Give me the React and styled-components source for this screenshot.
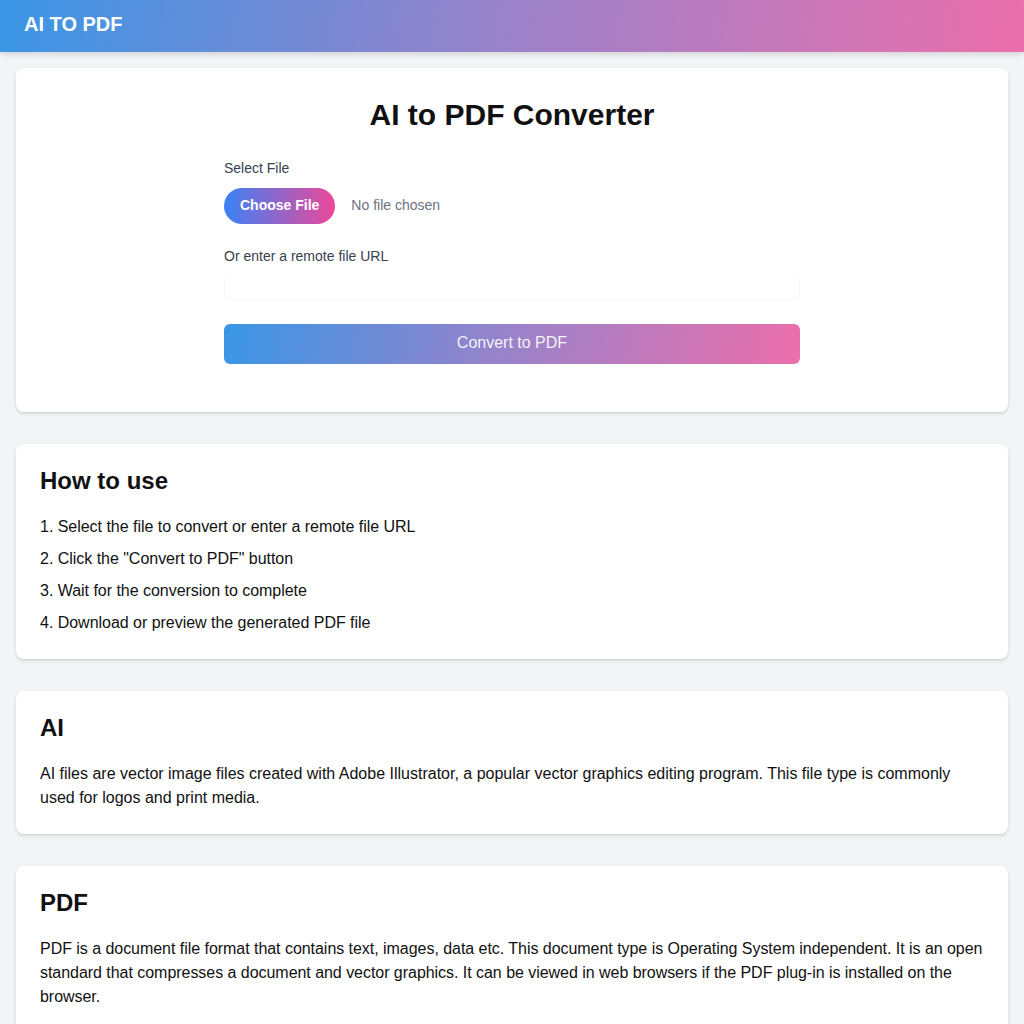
import React from 'react';
import styled, { createGlobalStyle } from 'styled-components';

const GlobalStyle = createGlobalStyle`
  * { box-sizing: border-box; }
  body {
    margin: 0;
    background: #f3f4f6;
    font-family: "Liberation Sans", Arial, sans-serif;
    color: #111;
  }
`;

const gradient = 'linear-gradient(100deg, #3a96e6 0%, #9b82c9 50%, #ec6fab 100%)';

const Header = styled.header`
  height: 52px;
  display: flex;
  align-items: center;
  padding: 0 24px 4px;
  background: ${gradient};
  box-shadow: 0 2px 6px rgba(0, 0, 0, 0.15);
`;

const Logo = styled.div`
  color: #fff;
  font-size: 20px;
  font-weight: 700;
`;

const Main = styled.main`
  padding: 16px;
  display: flex;
  flex-direction: column;
  gap: 32px;
`;

const Card = styled.section`
  background: #fff;
  border-radius: 8px;
  box-shadow: 0 2px 4px rgba(0, 0, 0, 0.1), 0 1px 2px rgba(0, 0, 0, 0.06);
  padding: ${p => (p.$tool ? '29px 24px 48px' : '24px')};
`;

const Title = styled.h1`
  margin: 0 0 25px;
  text-align: center;
  font-size: 30px;
  line-height: 36px;
  font-weight: 700;
`;

const Form = styled.div`
  width: 576px;
  margin: 0 auto;
`;

const Label = styled.div`
  font-size: 14px;
  line-height: 20px;
  color: #374151;
  margin-bottom: 10px;
`;

const FileRow = styled.div`
  display: flex;
  align-items: center;
  gap: 16px;
  margin-bottom: 22px;
`;

const ChooseButton = styled.label`
  height: 36px;
  padding: 0 16px 3px;
  display: inline-flex;
  align-items: center;
  border-radius: 18px;
  background: linear-gradient(to right, #3b82f6, #ec4899);
  color: #fff;
  font-size: 14px;
  font-weight: 700;
  cursor: pointer;
`;

const FileName = styled.span`
  font-size: 14px;
  color: #6b7280;
  padding-bottom: 3px;
`;

const UrlInput = styled.input`
  display: block;
  width: 100%;
  height: 24px;
  margin: 0 0 24px;
  border: 1px solid #f3f4f6;
  border-top-color: transparent;
  border-radius: 6px;
  outline: none;
  font-size: 14px;
`;

const ConvertButton = styled.button`
  display: block;
  width: 100%;
  height: 40px;
  padding: 0 0 3px;
  border: 0;
  border-radius: 6px;
  background: ${gradient};
  color: rgba(255, 255, 255, 0.92);
  font-family: inherit;
  font-size: 16px;
`;

const Heading = styled.h2`
  margin: 0 0 22px;
  font-size: 24px;
  line-height: 25px;
  font-weight: 700;
`;

const Steps = styled.ol`
  margin: 0;
  padding: 0;
  list-style: none;
`;

const Step = styled.li`
  font-size: 16px;
  line-height: 24px;
  letter-spacing: -0.03px;
  & + & { margin-top: 8px; }
`;

const Text = styled.p`
  margin: 0;
  font-size: 16px;
  line-height: 24px;
  letter-spacing: ${p => (p.$tight ? '-0.04px' : '0')};
`;

const steps = [
  'Select the file to convert or enter a remote file URL',
  'Click the "Convert to PDF" button',
  'Wait for the conversion to complete',
  'Download or preview the generated PDF file',
];

export default function App() {
  return (
    <>
      <GlobalStyle />
      <Header>
        <Logo>AI TO PDF</Logo>
      </Header>
      <Main>
        <Card $tool>
          <Title>AI to PDF Converter</Title>
          <Form>
            <Label>Select File</Label>
            <FileRow>
              <ChooseButton>Choose File</ChooseButton>
              <FileName>No file chosen</FileName>
            </FileRow>
            <Label>Or enter a remote file URL</Label>
            <UrlInput type="text" />
            <ConvertButton>Convert to PDF</ConvertButton>
          </Form>
        </Card>

        <Card>
          <Heading>How to use</Heading>
          <Steps>
            {steps.map((s, i) => (
              <Step key={i}>{i + 1}. {s}</Step>
            ))}
          </Steps>
        </Card>

        <Card>
          <Heading>AI</Heading>
          <Text>
            AI files are vector image files created with Adobe Illustrator, a popular vector graphics editing program. This file type is commonly used for logos and print media.
          </Text>
        </Card>

        <Card>
          <Heading>PDF</Heading>
          <Text $tight>
            PDF is a document file format that contains text, images, data etc. This document type is Operating System independent. It is an open standard that compresses a document and vector graphics. It can be viewed in web browsers if the PDF plug-in is installed on the browser.
          </Text>
        </Card>
      </Main>
    </>
  );
}
